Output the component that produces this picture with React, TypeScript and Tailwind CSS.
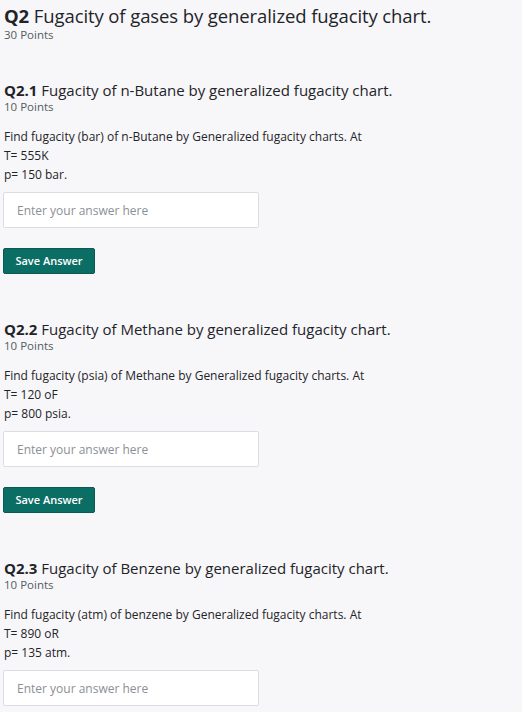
export default function App() {
  const parts = [
    {
      id: "Q2.1",
      title: "Fugacity of n-Butane by generalized fugacity chart.",
      lines: ["Find fugacity (bar) of n-Butane by Generalized fugacity charts. At", "T= 555K", "p= 150 bar."],
      save: true,
    },
    {
      id: "Q2.2",
      title: "Fugacity of Methane by generalized fugacity chart.",
      lines: ["Find fugacity (psia) of Methane by Generalized fugacity charts. At", "T= 120 oF", "p= 800 psia."],
      save: true,
    },
    {
      id: "Q2.3",
      title: "Fugacity of Benzene by generalized fugacity chart.",
      lines: ["Find fugacity (atm) of benzene by Generalized fugacity charts. At", "T= 890 oR", "p= 135 atm."],
      save: false,
    },
  ];

  return (
    <div className="min-h-[712px] bg-[#f7f7f9] px-[4px] pt-[4px] font-['Open_Sans',sans-serif] text-[#1f2429] overflow-hidden">
      <div>
        <h1 className="text-[18.5px] leading-[24px] tracking-[-0.1px]">
          <span className="font-bold">Q2</span> Fugacity of gases by generalized fugacity chart.
        </h1>
        <div className="text-[11.5px] leading-[14px] text-[#555b61]">30 Points</div>
      </div>

      {parts.map((p, i) => (
        <div key={p.id} className={i === 0 ? "mt-[38px]" : "mt-[45px]"}>
          <h2 className="text-[15px] leading-[20px]">
            <span className="font-bold">{p.id}</span> {p.title}
          </h2>
          <div className="text-[11.5px] leading-[14px] text-[#555b61]">10 Points</div>
          <div className="mt-[13px] text-[12px] leading-[19px]">
            {p.lines.map((l) => (
              <div key={l}>{l}</div>
            ))}
          </div>
          <input
            className="mt-[8px] block h-[36px] w-[256px] -ml-[1px] rounded-[2px] border border-[#dcdde3] bg-white px-[13px] text-[12px] placeholder:text-[#8b8f96] outline-none"
            placeholder="Enter your answer here"
          />
          {p.save && (
            <button className="mt-[20px] -ml-[1px] block h-[26px] w-[92px] rounded-[2px] border border-[#0a5a52] bg-[#0b6e65] text-[11px] font-semibold text-white">
              Save Answer
            </button>
          )}
        </div>
      ))}
    </div>
  );
}
